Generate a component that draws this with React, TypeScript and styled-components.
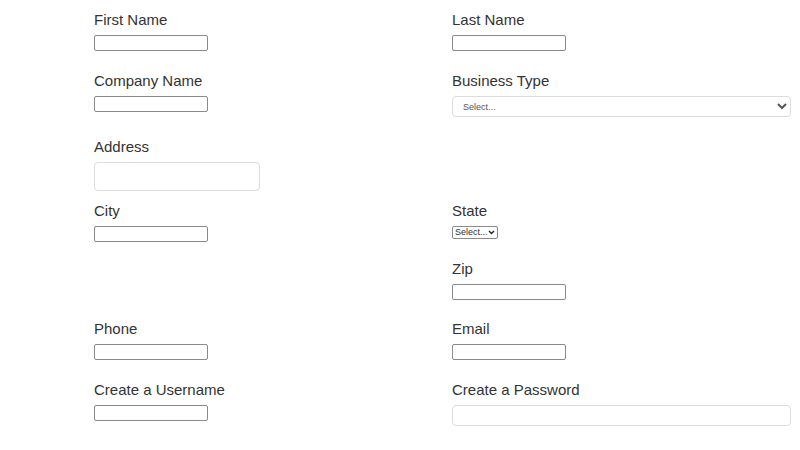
import React from "react";
import styled, { createGlobalStyle } from "styled-components";

const Global = createGlobalStyle`
  html, body { margin: 0; padding: 0; background: #fff; }
  body { font-family: "Liberation Sans", Arial, sans-serif; color: #333; }
  * { box-sizing: border-box; }
`;

const Form = styled.form`
  display: grid;
  grid-template-columns: 358px 339px;
  padding: 10px 0 0 94px;
  align-items: start;
`;

const Field = styled.div<{ $mb?: number }>`
  display: flex;
  flex-direction: column;
  align-items: flex-start;
  margin-bottom: ${(p) => (p.$mb ?? 20)}px;
`;

const Label = styled.label`
  font-size: 15px;
  line-height: 20px;
  color: #333;
  margin-bottom: 5px;
`;

const SmallInput = styled.input`
  width: 114px;
  height: 16px;
  border: 1px solid #8a8a8a;
  border-radius: 2px;
  padding: 0 2px;
  margin: 0;
  background: #fff;
  font-size: 10px;
`;

const WideInput = styled.input<{ $w?: number; $h?: number }>`
  width: ${(p) => (p.$w ? `${p.$w}px` : "100%")};
  height: ${(p) => p.$h ?? 21}px;
  border: 1px solid #dcdcdc;
  border-radius: 4px;
  padding: 0 8px;
  margin: 0;
  background: #fff;
  font-size: 10px;
`;

const WideSelect = styled.select`
  width: 100%;
  height: 21px;
  border: 1px solid #dcdcdc;
  border-radius: 4px;
  padding: 0 6px;
  margin: 0;
  background: #fff;
  color: #555;
  font-family: "Liberation Sans", Arial, sans-serif;
  font-size: 9px;
`;

const SmallSelectWrap = styled.div`
  position: relative;
  display: inline-block;
  width: 46px;
  height: 13px;
`;

const SmallSelect = styled.select`
  appearance: none;
  -webkit-appearance: none;
  display: block;
  width: 46px;
  height: 13px;
  border: 1px solid #8a8a8a;
  border-radius: 2px;
  padding: 0 10px 0 2px;
  margin: 0;
  background: #fff;
  color: #333;
  font-family: "Liberation Sans", Arial, sans-serif;
  font-size: 9px;
  line-height: 11px;
`;

const Chevron = styled.svg`
  position: absolute;
  right: 3px;
  top: 4px;
  width: 7px;
  height: 5px;
  pointer-events: none;
`;

const Empty = styled.div``;

export default function App() {
  return (
    <>
      <Global />
      <Form>
        <Field>
          <Label>First Name</Label>
          <SmallInput type="text" />
        </Field>
        <Field>
          <Label>Last Name</Label>
          <SmallInput type="text" />
        </Field>

        <Field>
          <Label>Company Name</Label>
          <SmallInput type="text" />
        </Field>
        <Field>
          <Label>Business Type</Label>
          <WideSelect defaultValue="">
            <option value="">Select...</option>
          </WideSelect>
        </Field>

        <Field $mb={10}>
          <Label>Address</Label>
          <WideInput type="text" $w={166} $h={29} />
        </Field>
        <Empty />

        <Field $mb={17}>
          <Label>City</Label>
          <SmallInput type="text" />
        </Field>
        <Field>
          <Label>State</Label>
          <SmallSelectWrap>
            <SmallSelect defaultValue="">
              <option value="">Select...</option>
            </SmallSelect>
            <Chevron viewBox="0 0 7 5">
              <path d="M1 1 L3.5 3.5 L6 1" fill="none" stroke="#222" strokeWidth="1.4" />
            </Chevron>
          </SmallSelectWrap>
        </Field>

        <Empty />
        <Field $mb={19}>
          <Label>Zip</Label>
          <SmallInput type="text" />
        </Field>

        <Field>
          <Label>Phone</Label>
          <SmallInput type="text" />
        </Field>
        <Field>
          <Label>Email</Label>
          <SmallInput type="text" />
        </Field>

        <Field>
          <Label>Create a Username</Label>
          <SmallInput type="text" />
        </Field>
        <Field>
          <Label>Create a Password</Label>
          <WideInput type="password" />
        </Field>
      </Form>
    </>
  );
}
